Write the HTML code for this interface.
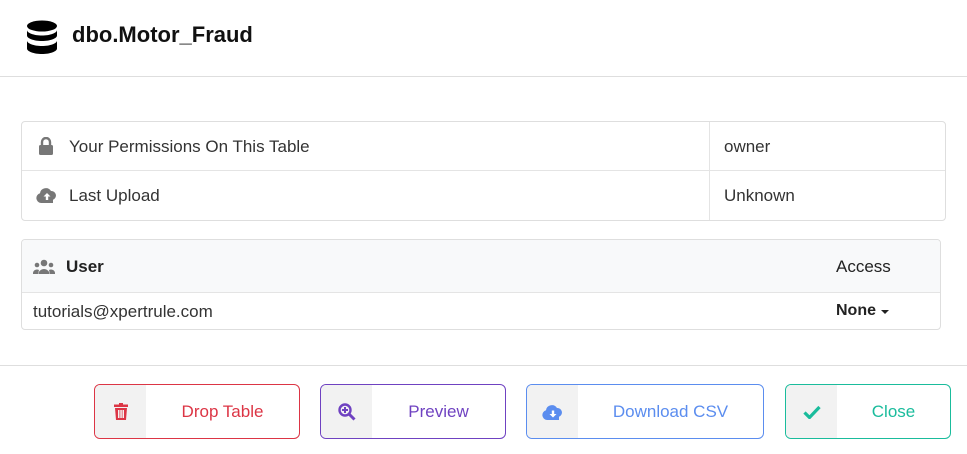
<!DOCTYPE html>
<html><head><style>
*{box-sizing:border-box;margin:0;padding:0}
body{width:967px;height:454px;background:#fff;font-family:"Liberation Sans",sans-serif;color:#222;position:relative;overflow:hidden}
.a{position:absolute}
.t{font-size:17px;color:#333}
.btn{position:absolute;top:384px;height:55px;border:1px solid;border-radius:6px;overflow:hidden;background:#fff}
.btn .ic{position:absolute;left:0;top:0;bottom:0;width:51px;background:#f2f2f2;display:flex;align-items:center;justify-content:center}
.btn .lb{position:absolute;left:51px;right:0;top:0;bottom:0;display:flex;align-items:center;justify-content:center;font-size:17px}
</style></head><body>
<svg class="a" style="left:26px;top:20px" width="32" height="35" viewBox="0 0 32 35">
<ellipse cx="16" cy="6" rx="15" ry="5.5" fill="#000"/>
<path d="M1 10c0 3 7 5.5 15 5.5S31 13 31 10v5.5c0 3-7 5.5-15 5.5S1 18.5 1 15.5z" fill="#000"/>
<path d="M1 20.5c0 3 7 5.5 15 5.5S31 23.5 31 20.5v8c0 3-7 5.5-15 5.5S1 31.5 1 28.5z" fill="#000"/>
</svg>
<div class="a" style="left:72px;top:22px;font-size:22px;font-weight:bold;color:#111">dbo.Motor_Fraud</div>
<div class="a" style="left:0;top:76px;width:967px;height:1px;background:#dedede"></div>

<div class="a" style="left:21px;top:121px;width:925px;height:100px;border:1px solid #dedede;border-radius:4px"></div>
<div class="a" style="left:22px;top:170px;width:923px;height:1px;background:#e4e4e4"></div>
<div class="a" style="left:709px;top:122px;width:1px;height:98px;background:#e4e4e4"></div>
<svg class="a" style="left:38px;top:137px" width="16" height="18" viewBox="0 0 16 18"><path d="M4 8V5a4 4 0 0 1 8 0v3" stroke="#777" stroke-width="2.4" fill="none"/><rect x="1" y="8" width="14" height="10" rx="1.5" fill="#777"/></svg>
<div class="a t" style="left:69px;top:137px">Your Permissions On This Table</div>
<div class="a t" style="left:724px;top:137px">owner</div>
<svg class="a" style="left:36px;top:187px" width="22" height="16" viewBox="0 0 22 16"><path d="M5 16a5 5 0 0 1-1-9.8A6 6 0 0 1 15 4a4.5 4.5 0 0 1 2 8.7V16z" fill="#777"/><path d="M11 6l-3.5 3.5h2.3V13h2.4V9.5h2.3z" fill="#fff"/></svg>
<div class="a t" style="left:69px;top:186px">Last Upload</div>
<div class="a t" style="left:724px;top:186px">Unknown</div>

<div class="a" style="left:21px;top:239px;width:920px;height:91px;border:1px solid #dedede;border-radius:4px;overflow:hidden"><div style="height:53px;background:#f8f9fa;border-bottom:1px solid #e4e4e4"></div></div>
<svg class="a" style="left:33px;top:259px" width="22" height="15" viewBox="0 0 22 15"><circle cx="11" cy="4" r="3.3" fill="#777"/><circle cx="4" cy="6" r="2.3" fill="#777"/><circle cx="18" cy="6" r="2.3" fill="#777"/><path d="M5.5 15a5.5 5 0 0 1 11 0z" fill="#777"/><path d="M0 14a4 3.5 0 0 1 6-3l-1 4H0zM22 14a4 3.5 0 0 0-6-3l1 4h5z" fill="#777"/></svg>
<div class="a" style="left:66px;top:257px;font-size:17px;font-weight:bold;color:#222">User</div>
<div class="a" style="left:836px;top:257px;font-size:17px;color:#222">Access</div>
<div class="a t" style="left:33px;top:302px;color:#333">tutorials@xpertrule.com</div>
<div class="a" style="left:836px;top:302px;font-size:16px;font-weight:bold;color:#222">None</div>
<div class="a" style="left:881px;top:310px;width:0;height:0;border-left:4px solid transparent;border-right:4px solid transparent;border-top:4px solid #222"></div>

<div class="a" style="left:0;top:365px;width:967px;height:1px;background:#dedede"></div>

<div class="btn" style="left:94px;width:206px;border-color:#dc3545">
<div class="ic"><svg width="14" height="17" viewBox="0 0 14 17"><rect x="0" y="1.5" width="14" height="2.5" fill="#dc3545"/><rect x="5" y="0" width="4" height="2" fill="#dc3545"/><path d="M1 5h12l-1 12H2zM4 7v8h1.5V7zM6.3 7v8h1.5V7zM8.5 7v8H10V7z" fill="#dc3545" fill-rule="evenodd"/></svg></div>
<div class="lb" style="color:#dc3545">Drop Table</div></div>

<div class="btn" style="left:320px;width:186px;border-color:#6f42c1">
<div class="ic"><svg width="18" height="18" viewBox="0 0 18 18"><circle cx="7" cy="7" r="5.5" fill="none" stroke="#6f42c1" stroke-width="2.4"/><path d="M11 11l5.5 5.5" stroke="#6f42c1" stroke-width="3"/><path d="M7 4v6M4 7h6" stroke="#6f42c1" stroke-width="2"/></svg></div>
<div class="lb" style="color:#6f42c1">Preview</div></div>

<div class="btn" style="left:526px;width:238px;border-color:#5b8def">
<div class="ic"><svg width="22" height="16" viewBox="0 0 22 16"><path d="M5 16a5 5 0 0 1-1-9.8A6 6 0 0 1 15 4a4.5 4.5 0 0 1 2 8.7V16z" fill="#5b8def"/><path d="M11 13.5l-3.5-3.5h2.3V6.5h2.4V10h2.3z" fill="#fff"/></svg></div>
<div class="lb" style="color:#5b8def">Download CSV</div></div>

<div class="btn" style="left:785px;width:166px;border-color:#1abc9c">
<div class="ic"><svg width="18" height="14" viewBox="0 0 18 14"><path d="M1.5 7.5l5 5L16.5 2" fill="none" stroke="#1abc9c" stroke-width="3.2"/></svg></div>
<div class="lb" style="color:#1abc9c">Close</div></div>
</body></html>
